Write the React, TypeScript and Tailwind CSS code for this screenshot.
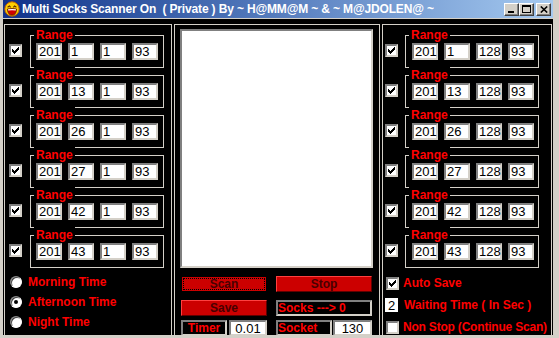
import React from 'react';

const sunken =
  'border-2 border-t-[#808080] border-l-[#808080] border-b-[#d4d0c8] border-r-[#d4d0c8]';

const leftRows = [
  ['201', '1', '1', '93'],
  ['201', '13', '1', '93'],
  ['201', '26', '1', '93'],
  ['201', '27', '1', '93'],
  ['201', '42', '1', '93'],
  ['201', '43', '1', '93'],
];

const rightRows = [
  ['201', '1', '128', '93'],
  ['201', '13', '128', '93'],
  ['201', '26', '128', '93'],
  ['201', '27', '128', '93'],
  ['201', '42', '128', '93'],
  ['201', '43', '128', '93'],
];

// classic 7x7 check mark
const tick = [
  [6, 0, 1], [5, 1, 2], [0, 2, 1], [4, 2, 3], [0, 3, 2], [3, 3, 3], [0, 4, 5], [1, 5, 3], [2, 6, 1],
];

function Check({ on }: { on?: boolean }) {
  return (
    <div className={`w-[13px] h-[13px] shrink-0 bg-white ${sunken} flex items-center justify-center`}>
      {on && (
        <svg width="7" height="7" viewBox="0 0 7 7" shapeRendering="crispEdges">
          {tick.map(([x, y, w], i) => (
            <rect key={i} x={x} y={y} width={w} height={1} fill="#000" />
          ))}
        </svg>
      )}
    </div>
  );
}

function Radio({ on }: { on?: boolean }) {
  return (
    <div className="w-[12px] h-[12px] shrink-0 rounded-full bg-white border border-t-[#808080] border-l-[#808080] border-b-white border-r-white shadow-[inset_1px_1px_0_#404040] flex items-center justify-center">
      {on && <div className="w-[4px] h-[4px] rounded-full bg-black" />}
    </div>
  );
}

function Field({ v }: { v: string }) {
  return (
    <div className={`w-[26px] h-[17px] bg-white ${sunken} text-[13px] leading-[13px] text-black pl-[1px]`}>
      {v}
    </div>
  );
}

function Group({ vals, pad }: { vals: string[]; pad: string }) {
  return (
    <div className="relative w-[134px] h-[33px] border border-[#d4d0c8]">
      <span className="absolute left-[3px] -top-[9px] bg-black px-[2px] text-[12px] leading-[16px] font-bold text-[#ff0000]">
        Range
      </span>
      <div className={`flex gap-[6px] pt-[7px] ${pad}`}>
        {vals.map((v, i) => (
          <Field key={i} v={v} />
        ))}
      </div>
    </div>
  );
}

function CapBtn({ children }: { children: React.ReactNode }) {
  return (
    <div className="w-[15px] h-[13px] bg-[#d4d0c8] border border-t-white border-l-white border-b-[#404040] border-r-[#404040] shadow-[inset_-1px_-1px_0_#808080] flex items-center justify-center">
      {children}
    </div>
  );
}

function Smiley() {
  return (
    <svg width="16" height="16" viewBox="0 0 16 16">
      <circle cx="8" cy="8" r="7.2" fill="#ffd000" stroke="#c06000" strokeWidth="1" />
      <path d="M3.6 6.2 L5.4 5 L6.6 6.4" stroke="#5a2a00" strokeWidth="1.1" fill="none" />
      <path d="M9.4 6.4 L10.6 5 L12.4 6.2" stroke="#5a2a00" strokeWidth="1.1" fill="none" />
      <path d="M3.4 8 Q8 7 12.6 8 Q12.2 14.2 8 14.2 Q3.8 14.2 3.4 8 Z" fill="#d00000" stroke="#5a2a00" strokeWidth="0.8" />
      <path d="M4 8.3 Q8 7.6 12 8.3 L11.8 9.5 Q8 9 4.2 9.5 Z" fill="#ffffff" />
    </svg>
  );
}

const red = 'text-[12px] font-bold text-[#ff0000] leading-none whitespace-nowrap';
const btnText = 'text-[12px] font-bold text-[#480000] leading-none';
const raised = 'border border-t-[#ff4040] border-l-[#ff4040] border-b-[#600000] border-r-[#600000]';

export default function App() {
  return (
    <div className="w-[559px] h-[338px] overflow-hidden bg-[#d4d0c8] pl-[3px] pr-[6px] font-['Liberation_Sans',Arial,sans-serif]">
      {/* title bar */}
      <div className="h-[18px] mb-[1px] flex items-center bg-linear-to-r from-[#12318a] to-[#a6caf0]">
        <div className="ml-[1px]">
          <Smiley />
        </div>
        <span className="ml-[2px] text-white font-bold text-[12px] tracking-[-0.15px] leading-none whitespace-pre">
          {'Multi Socks Scanner On  ( Private ) By ~ H@MM@M ~ & ~ M@JDOLEN@ ~'}
        </span>
        <div className="ml-auto mr-[2px] flex items-center">
          <CapBtn>
            <svg width="7" height="7" viewBox="0 0 7 7" shapeRendering="crispEdges">
              <rect x="0" y="5" width="6" height="2" fill="#000" />
            </svg>
          </CapBtn>
          <CapBtn>
            <svg width="9" height="8" viewBox="0 0 9 8" shapeRendering="crispEdges">
              <rect x="0.5" y="0.5" width="8" height="7" fill="none" stroke="#000" />
              <rect x="0" y="1" width="9" height="1" fill="#000" />
            </svg>
          </CapBtn>
          <div className="w-[2px]" />
          <CapBtn>
            <svg width="8" height="7" viewBox="0 0 8 7">
              <path d="M0.8 0.5 L7.2 6.5 M7.2 0.5 L0.8 6.5" stroke="#000" strokeWidth="1.6" />
            </svg>
          </CapBtn>
        </div>
      </div>

      {/* client area */}
      <div className="h-[316px] overflow-hidden bg-black flex gap-[2px] pt-[5px] pl-[1px]">
        {/* left panel */}
        <div className="w-[168px] h-[330px] shrink-0 border border-[#d4d0c8] pt-[10px]">
          <div className="flex flex-col gap-[7px]">
            {leftRows.map((r, i) => (
              <div key={i} className="flex">
                <div className="ml-[4px] mt-[9px]">
                  <Check on />
                </div>
                <div className="ml-[8px]">
                  <Group vals={r} pad="pl-[5px]" />
                </div>
              </div>
            ))}
          </div>
          <div className="mt-[4px] flex flex-col">
            {[
              ['Morning Time', false],
              ['Afternoon Time', true],
              ['Night Time', false],
            ].map(([t, on], i) => (
              <div key={i} className="h-[20px] flex items-center pl-[5px] gap-[6px]">
                <Radio on={on as boolean} />
                <span className={red}>{t as string}</span>
              </div>
            ))}
          </div>
        </div>

        {/* middle panel */}
        <div className="w-[206px] h-[330px] shrink-0 border border-[#d4d0c8]">
          <div className={`ml-[5px] mt-[4px] w-[193px] h-[239px] bg-white ${sunken}`} />
          <div className="mt-[8px] ml-[6px] flex gap-[9px]">
            <div className="w-[86px] h-[16px] bg-[#cc0000] border border-black p-[1px]">
              <div className={`w-full h-full border border-dotted border-black flex items-center justify-center ${btnText}`}>
                Scan
              </div>
            </div>
            <div className={`w-[96px] h-[16px] bg-[#cc0000] ${raised} flex items-center justify-center ${btnText}`}>
              Stop
            </div>
          </div>
          <div className="mt-[8px] ml-[6px] flex gap-[9px]">
            <div className={`w-[86px] h-[16px] bg-[#cc0000] ${raised} flex items-center justify-center ${btnText}`}>
              Save
            </div>
            <div className={`w-[96px] h-[16px] bg-black ${sunken} flex items-center ${red}`}>
              {'Socks ---> 0'}
            </div>
          </div>
          <div className="mt-[4px] ml-[6px] flex">
            <div className={`w-[46px] h-[16px] bg-black ${sunken} flex items-center justify-center ${red}`}>
              Timer
            </div>
            <div className={`ml-[2px] w-[38px] h-[16px] bg-white ${sunken} flex items-center justify-center text-[13px] leading-none text-black`}>
              0.01
            </div>
            <div className={`ml-[9px] w-[56px] h-[16px] bg-black ${sunken} flex items-center ${red}`}>
              Socket
            </div>
            <div className={`ml-[1px] w-[39px] h-[16px] bg-white ${sunken} flex items-center justify-center text-[13px] leading-none text-black`}>
              130
            </div>
          </div>
        </div>

        {/* right panel */}
        <div className="w-[170px] h-[330px] shrink-0 border border-[#d4d0c8] pt-[10px]">
          <div className="flex flex-col gap-[7px]">
            {rightRows.map((r, i) => (
              <div key={i} className="flex">
                <div className="ml-[2px] mt-[9px]">
                  <Check on />
                </div>
                <div className="ml-[7px]">
                  <Group vals={r} pad="pl-[6px]" />
                </div>
              </div>
            ))}
          </div>
          <div className="mt-[4px] flex flex-col">
            <div className="h-[22px] flex items-center pl-[3px] gap-[4px]">
              <Check on />
              <span className={red}>Auto Save</span>
            </div>
            <div className="h-[22px] flex items-center pl-[2px] gap-[6px]">
              <div className="w-[13px] h-[14px] bg-white flex items-center justify-center text-[13px] leading-none text-black">
                2
              </div>
              <span className={red}>Waiting Time ( In Sec )</span>
            </div>
            <div className="h-[22px] flex items-center pl-[3px] gap-[4px]">
              <Check />
              <span className={`${red} tracking-[-0.2px]`}>Non Stop (Continue Scan)</span>
            </div>
          </div>
        </div>
      </div>
    </div>
  );
}
